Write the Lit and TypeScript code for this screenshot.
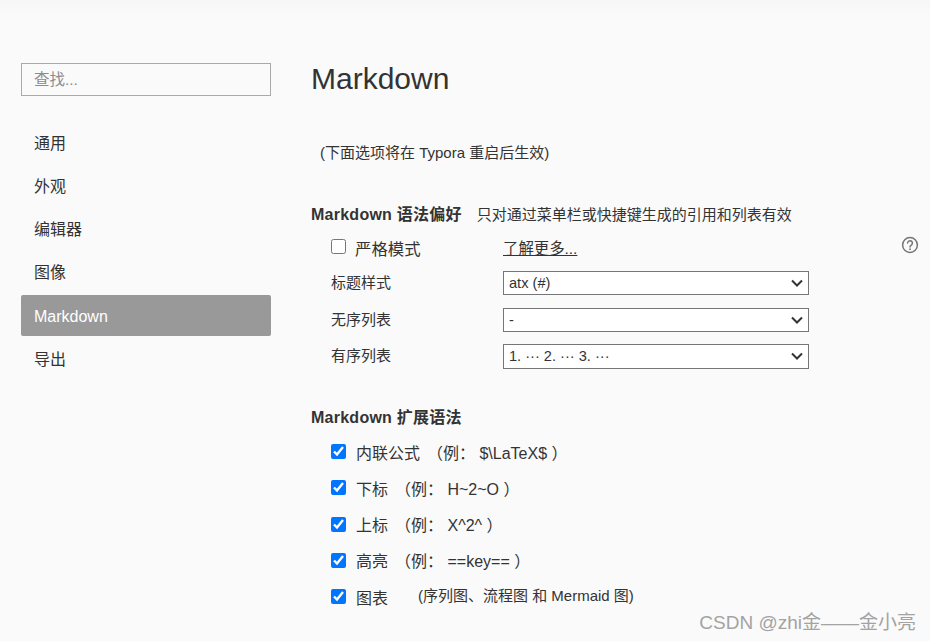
import { LitElement, html, css } from "lit";
import { customElement } from "lit/decorators.js";

const nav = ["通用", "外观", "编辑器", "图像", "Markdown", "导出"];
const selects = [
  ["标题样式", "atx (#)"],
  ["无序列表", "-"],
  ["有序列表", "1. ··· 2. ··· 3. ···"],
];
const exts = [
  ["内联公式", "（例： $\\LaTeX$ ）"],
  ["下标", "（例： H~2~O ）"],
  ["上标", "（例： X^2^ ）"],
  ["高亮", "（例： ==key== ）"],
];

@customElement("app-root")
export class AppRoot extends LitElement {
  static styles = css`
    :host {
      display: block;
      width: 930px;
      height: 641px;
      overflow: hidden;
      position: relative;
      background: linear-gradient(#f6f6f6, #fafafa 14px);
      color: #333;
      font: 15px/20px "Liberation Sans", "Noto Sans CJK SC", sans-serif;
    }
    .page { display: flex; padding: 63px 0 0 21px; gap: 40px; }
    .side { width: 250px; flex: none; }
    .search {
      display: block; box-sizing: border-box; width: 250px; height: 33px;
      border: 1px solid #a9a9a9; background: #fafafa; padding: 0 12px;
      font: 15.5px "Liberation Sans", "Noto Sans CJK SC", sans-serif; color: #777; outline: none;
    }
    .search::placeholder { color: #8c8c8c; opacity: 1; }
    .nav { margin-top: 26px; display: flex; flex-direction: column; gap: 2.3px; }
    .item { box-sizing: border-box; height: 41px; display: flex; align-items: center; padding: 2px 0 0 13px; border-radius: 2px; font-size: 16px; }
    .item.on { background: #999; color: #fff; }
    .main { flex: 1; min-width: 0; }
    h1 { margin: 0; font-size: 30px; font-weight: 400; line-height: 34px; color: #333; height: 34px; margin-top: -1px; }
    .note { margin: 47px 0 0 9px; font-size: 15px; line-height: 20px; }
    .head { display: flex; align-items: center; margin-top: 42px; height: 20px; gap: 15px; }
    .head b { font-size: 16px; font-weight: 700; letter-spacing: 0.25px; }
    .head span { font-size: 15px; }
    .strict { display: grid; grid-template-columns: 172px 1fr auto; align-items: center; margin: 11px 11px 0 20px; height: 24px; }
    .check { display: flex; align-items: center; gap: 9px; font-size: 16.4px; }
    input[type="checkbox"] { width: 15px; height: 15px; margin: 0 0 4px; accent-color: #0075ff; flex: none; }
    .check input[type="checkbox"] { margin-bottom: 5px; }
    .strict a { color: #333; font-size: 15.4px; text-decoration: underline; }
    .help { display: block; width: 18px; height: 18px; margin-bottom: 8px; }
    .rows { display: flex; flex-direction: column; gap: 12.2px; margin: 11px 0 0 20px; }
    .row { display: grid; grid-template-columns: 172px 306px; align-items: center; height: 24.4px; font-size: 15px; }
    .wrap { position: relative; display: block; width: 306px; height: 24.4px; }
    select {
      display: block; appearance: none; -webkit-appearance: none;
      box-sizing: border-box; width: 306px; height: 100%; border: 1px solid #767676;
      border-radius: 0; background-color: #fff; color: #333; font: 14.6px "Liberation Sans", sans-serif; padding: 0 5px; outline: none;
    }
    .chev { position: absolute; right: 6px; top: 8px; width: 12px; height: 8px; pointer-events: none; }
    .head.ext { margin-top: 39px; }
    .exts { display: flex; flex-direction: column; gap: 14.3px; margin: 15px 0 0 20px; }
    .ext-row { display: flex; align-items: center; height: 22px; font-size: 15px; gap: 10px; }
    .ext-row .name { font-size: 16px; }
    .ext-row .ex { font-size: 16px; margin-left: -3px; white-space: pre; }
    .ext-row .chart { font-size: 15px; margin-left: 20px; margin-top: -5px; }
    .mark {
      position: absolute; right: 14px; bottom: 6px; font-size: 19px; line-height: 24px;
      color: #a3a3a3; white-space: nowrap;
    }
  `;

  render() {
    return html`
      <div class="page">
        <aside class="side">
          <input class="search" placeholder="查找..." />
          <nav class="nav">
            ${nav.map((n) => html`<div class="item ${n === "Markdown" ? "on" : ""}">${n}</div>`)}
          </nav>
        </aside>
        <main class="main">
          <h1>Markdown</h1>
          <p class="note">(下面选项将在 Typora 重启后生效)</p>
          <div class="head"><b>Markdown 语法偏好</b><span>只对通过菜单栏或快捷键生成的引用和列表有效</span></div>
          <div class="strict">
            <label class="check"><input type="checkbox" /><span>严格模式</span></label>
            <a href="#">了解更多...</a>
            <svg class="help" viewBox="0 0 18 18" fill="none" stroke="#757575" stroke-width="1.5">
              <circle cx="9" cy="9" r="7.4" />
              <path d="M6.6 7.1a2.4 2.4 0 1 1 3.7 2c-.9.6-1.3 1-1.3 2" stroke-linecap="round" />
              <circle cx="9" cy="13.2" r=".9" fill="#757575" stroke="none" />
            </svg>
          </div>
          <div class="rows">
            ${selects.map(
              ([l, v]) => html`<div class="row"><span>${l}</span><span class="wrap"><select><option>${v}</option></select><svg class="chev" viewBox="0 0 12 8" fill="none" stroke="#333" stroke-width="2"><path d="M1 1.5l5 5 5-5" /></svg></span></div>`
            )}
          </div>
          <div class="head ext"><b>Markdown 扩展语法</b></div>
          <div class="exts">
            ${exts.map(
              ([n, e]) => html`<label class="ext-row"><input type="checkbox" checked /><span class="name">${n}</span><span class="ex">${e}</span></label>`
            )}
            <label class="ext-row"><input type="checkbox" checked /><span class="name">图表</span><span class="chart">(序列图、流程图 和 Mermaid 图)</span></label>
          </div>
        </main>
      </div>
      <div class="mark">CSDN @zhi金——金小亮</div>
    `;
  }
}
